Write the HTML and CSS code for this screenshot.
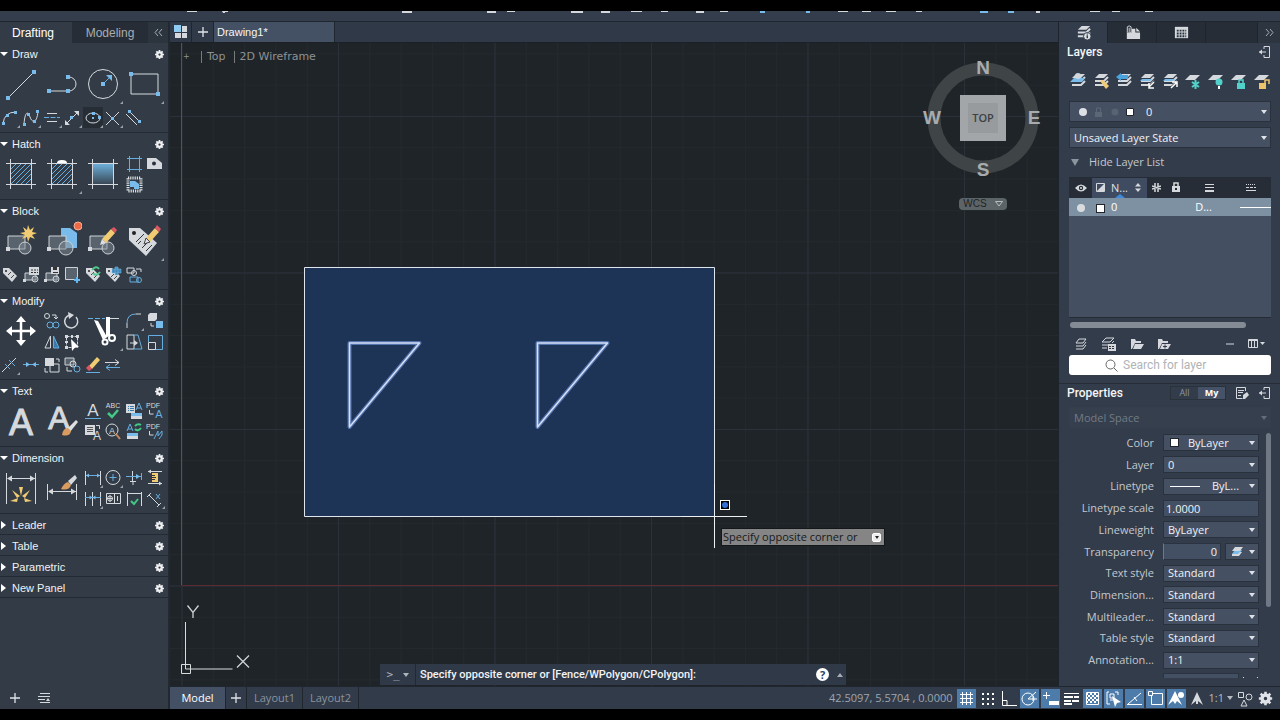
FILE: index.html
```html
<!DOCTYPE html>
<html lang="en">
<head>
    <meta charset="UTF-8">
    <meta name="viewport" content="width=device-width, initial-scale=1.0">
    <title>Drawing1*</title>
    <link rel="stylesheet" href="styles.css">
</head>
<body>
    <!-- shared icon shapes -->
    <svg class="defs" width="0" height="0">
        <symbol id="gear" viewBox="0 0 16 16">
            <circle cx="8" cy="8" r="4" fill="none" stroke="currentColor" stroke-width="4"/>
            <path d="M8 0v4M8 12v4M0 8h4M12 8h4M2.4 2.4l2.8 2.8M10.8 10.8l2.8 2.8M2.4 13.6l2.8-2.8M10.8 5.2l2.8-2.8" stroke="currentColor" stroke-width="3"/>
        </symbol>
        <symbol id="plus" viewBox="0 0 12 12"><path d="M6 1v10M1 6h10" stroke="currentColor" stroke-width="1.3"/></symbol>
        <symbol id="stack" viewBox="0 0 18 18">
            <path class="lf" d="M7 2h9l-4 4H3z"/>
            <path class="l2" d="M3 9h9l4-4M3 13h9l4-4"/>
        </symbol>
        <symbol id="dock" viewBox="0 0 12 12"><path class="l" d="M5 3V.5h5.500v11H5V9"/><path class="l" d="M0 6h7"/><path class="lf" d="M0 6l3-2.500v5z"/></symbol>
    </svg>

    <div class="app">
        <div class="top-strip">
            <svg width="1280" height="11">
                <path class="lf" d="M187 0h10v1h-10zM222 0h6v1h-3v1h-2zM402 0h10v2h-10zM487 0h9v2h-9zM507 0h8v1h-8zM571 0h12v2h-12zM601 0h9v2h-9zM631 0h11v1h-11zM661 0h7v1h-7zM696 0h8v2h-8zM720 0h8v1h-8zM838 0h10v1h-10zM862 0h9v1h-9zM886 0h10v1h-10zM916 0h6v1h-6zM1036 0h4v2h-4zM1090 0h10v1h-10zM1112 0h8v1h-8zM1145 0h8v1h-8z"/>
                <path class="bf" d="M760 0h5v2h-5zM806 0h4v2h-4zM980 0h8v2h-8zM1008 0h6v2h-6z"/>
            </svg>
        </div>
        <div class="workspace">
            <aside class="tools">
                <nav class="tool-tabs">
                    <button class="active">Drafting</button>
                    <button>Modeling</button>
                    <button class="collapse" aria-label="Collapse"><svg width="9" height="7" viewBox="0 0 9 7"><path d="M4 0L1 3.500 4 7M8 0L5 3.500 8 7" fill="none" stroke="currentColor"/></svg></button>
                </nav>

                <section class="panel">
                    <header><i class="tri open"></i><h2>Draw</h2><button class="gear" aria-label="Draw settings"><svg><use href="#gear"/></svg></button></header>
                    <div class="grid">
                        <button class="big" aria-label="Line"><svg viewBox="0 0 40 40"><path class="l" d="M7 34L33 8"/><path class="bf" d="M5 32h4v4H5zM31 6h4v4h-4z"/></svg></button>
                        <button class="big" aria-label="Polyline"><svg viewBox="0 0 40 40"><path class="l" d="M7 27h20a7 7 0 0 0 0-14h-2"/><path class="bf" d="M5 25h4v4H5zM24 25h4v4h-4zM24 11h4v4h-4z"/></svg></button>
                        <button class="big" aria-label="Circle"><svg viewBox="0 0 40 40"><circle class="l" cx="20" cy="20" r="14.500"/><path class="b" d="M20 20l7-7"/><path class="bf" d="M18 18h4v4h-4zM29 11v6l-6-6z"/><path class="corner" d="M40 40h-3l3-3z"/></svg></button>
                        <button class="big" aria-label="Rectangle"><svg viewBox="0 0 40 40"><path class="l" d="M7 10h27v20H7z"/><path class="bf" d="M5 8h4v4H5zM32 28h4v4h-4z"/><path class="corner" d="M40 40h-3l3-3z"/></svg></button>
                    </div>
                    <div class="grid second">
                        <button aria-label="Arc"><svg viewBox="0 0 20 20"><path class="l" d="M3 16Q4 4 16 4"/><path class="bf" d="M2 14h3v3H2zM6 6h3v3H6zM14 3h3v3h-3z"/><path class="corner" d="M20 20h-3l3-3z"/></svg></button>
                        <button aria-label="Spline"><svg viewBox="0 0 20 20"><path class="l" d="M3 16C4 3 7 3 9 9s7 7 8-6"/><path class="bf" d="M2 15h3v3H2zM6 5h3v3H6zM12 12h3v3h-3zM15 2h3v3h-3z"/><path class="corner" d="M20 20h-3l3-3z"/></svg></button>
                        <button aria-label="Construction line"><svg viewBox="0 0 20 20"><path class="l" d="M5 5.500h10M5 13.500h10"/><path class="b" d="M2 9.500h16" stroke-dasharray="5 1.500"/><path class="corner" d="M20 20h-3l3-3z"/></svg></button>
                        <button aria-label="Ray"><svg viewBox="0 0 20 20"><path class="l" d="M5 15L15 5"/><path class="lf" d="M3 17v-5l5 5zM17 3v5l-5-5z"/><path class="bf" d="M8 8h3v3H8z"/><path class="corner" d="M20 20h-3l3-3z"/></svg></button>
                        <button class="hover" aria-label="Ellipse"><svg viewBox="0 0 20 20"><ellipse class="l" cx="10" cy="10" rx="7" ry="5"/><path class="bf" d="M9 9h2v2H9zM9 4h3v3H9zM15 8h3v3h-3z"/><path class="corner" d="M20 20h-3l3-3z"/></svg></button>
                        <button aria-label="Divide"><svg viewBox="0 0 20 20"><path class="l" d="M3 4l13 13M16 4L3 17"/><path class="bf" d="M8 9h3v3H8z"/><path class="corner" d="M20 20h-3l3-3z"/></svg></button>
                        <button aria-label="Multiline"><svg viewBox="0 0 20 20"><path class="l" d="M5 3l11 11M2 6l11 11"/><path class="bf" d="M4 2h3v3H4zM14 12h3v3h-3z"/></svg></button>
                    </div>
                </section>

                <section class="panel">
                    <header><i class="tri open"></i><h2>Hatch</h2><button class="gear" aria-label="Hatch settings"><svg><use href="#gear"/></svg></button></header>
                    <div class="grid">
                        <button class="big" aria-label="Hatch"><svg viewBox="0 0 40 40"><path class="b" d="M10 15l5-5M10 20l10-10M10 25l15-15M10 30l20-20M15 30l16-16M20 30l11-11M25 30l6-6"/><path class="l" d="M5 9.500h30M5 30.500h30M9.500 5v30M30.500 5v30"/></svg></button>
                        <button class="big" aria-label="Boundary"><svg viewBox="0 0 40 40"><path class="b" d="M10 15l5-5M10 20l10-10M10 25l15-15M10 30l20-20M15 30l16-16M20 30l11-11M25 30l6-6"/><path class="l" d="M5 9.500h30M5 30.500h30M9.500 5v30M30.500 5v30"/><path fill="#fff" d="M15 9q0-3 5-3t5 3z"/><path class="corner" d="M40 40h-3l3-3z"/></svg></button>
                        <button class="big" aria-label="Gradient"><svg viewBox="0 0 40 40"><defs><linearGradient id="fade" x2="0" y2="1"><stop stop-color="#6fb4e0"/><stop offset="1" stop-color="#37434f"/></linearGradient></defs><path fill="url(#fade)" d="M9 9h22v22H9z"/><path class="l" d="M5 9.500h30M5 30.500h30M9.500 5v30M30.500 5v30"/></svg></button>
                        <button aria-label="Region"><svg viewBox="0 0 20 20"><path class="b" d="M3 4.500h15M3 15.500h15M5.500 2v16M15.500 2v16"/></svg></button>
                        <button aria-label="Wipeout"><svg viewBox="0 0 20 20"><path class="lf" d="M2 4h9l6 5v6H2z"/><circle cx="9" cy="9.500" r="2" fill="#29323c"/></svg></button>
                        <button aria-label="Hatch edit"><svg viewBox="0 0 20 20"><path fill="none" stroke="#dce0e4" stroke-width="3" stroke-dasharray="1.200 1" d="M4 3h13v13H4z"/><path class="bf" d="M6 6h5l4 3v5h-5v-2H6z"/></svg></button>
                    </div>
                </section>

                <section class="panel">
                    <header><i class="tri open"></i><h2>Block</h2><button class="gear" aria-label="Block settings"><svg><use href="#gear"/></svg></button></header>
                    <div class="grid">
                        <button class="big" aria-label="Create block"><svg viewBox="0 0 40 40"><path class="blk" d="M7 15h17v13H7z"/><circle class="ring" cx="24" cy="27" r="6"/><path class="lf" d="M5 26h4v4H5z"/><path class="yf" d="M27 4l2 5 4-3-2 5 5 1-5 2 3 4-5-2-2 5-1-5-5 2 3-4-5-2 5-1-2-5 4 3z"/></svg></button>
                        <button class="big" aria-label="Insert block"><svg viewBox="0 0 40 40"><path class="bf" d="M19 7h9l7 5v15H19z"/><path class="blk" d="M7 15h17v13H7z"/><circle class="ring" cx="24" cy="27" r="7"/><path class="lf" d="M5 26h4v4H5z"/><circle cx="36" cy="5" r="4" fill="#ee6945" stroke="#f7b09a"/></svg></button>
                        <button class="big" aria-label="Edit block"><svg viewBox="0 0 40 40"><path class="blk" d="M7 15h17v13H7z"/><circle class="ring" cx="25" cy="27" r="6"/><path class="lf" d="M5 26h4v4H5z"/><path class="yf" d="M19 18l9-10 4 4-9 10z"/><path fill="#dce0e4" d="M19 18l4 4-6 2z"/><path fill="#df5663" d="M28 8l3-2 3 3-2 3z"/></svg></button>
                        <button class="big" aria-label="Edit attributes"><svg viewBox="0 0 40 40"><path class="lf" d="M5 7h11l17 15-11 13L5 19z"/><circle cx="10" cy="12" r="2" fill="#222"/><path fill="none" stroke="#333" d="M12 21l8-8M14 23l3-3M18 27l8-8M22 30l6-6"/><path class="yf" d="M22 17l9-10 4 4-9 10z"/><path fill="#dce0e4" stroke="#444" d="M22 17l4 4-6 2z"/><path fill="#df5663" d="M31 7l2-3 4 4-2 3z"/><path class="corner" d="M40 40h-3l3-3z"/></svg></button>
                    </div>
                    <div class="grid second">
                        <button aria-label="Define attribute"><svg viewBox="0 0 20 20"><path class="lf" d="M3 3h6l8 8-5 6-9-9z"/><circle cx="6" cy="6" r="1" fill="#222"/><path stroke="#444" d="M8 10l3-3M11 13l3-3"/></svg></button>
                        <button aria-label="Block attribute manager"><svg viewBox="0 0 20 20"><path class="blk" d="M4 8h11v7H4z"/><circle class="ring" cx="14" cy="14" r="3"/><path class="lf" d="M8 2h10v8H8zM2 14h3v3H2z"/><path stroke="#333" stroke-dasharray="2 1" d="M10 5h7M10 7.500h7"/></svg></button>
                        <button aria-label="Save block"><svg viewBox="0 0 20 20"><path class="blk" d="M4 8h11v7H4z"/><circle class="ring" cx="14" cy="14" r="3"/><path class="lf" d="M9 2h8v7H9zM2 14h3v3H2z"/><path fill="#333" d="M11 2h4v3h-4zM11 7h5v1h-5z"/></svg></button>
                        <button aria-label="Base point"><svg viewBox="0 0 20 20"><path class="blk" d="M3.500 2.500h12v12h-12z"/><path stroke="#65b8ed" stroke-width="2" d="M15 12v6M12 15h6"/></svg></button>
                        <button aria-label="Sync attributes"><svg viewBox="0 0 20 20"><path class="lf" d="M3 3h6l8 8-5 6-9-9z"/><circle cx="6" cy="6" r="1" fill="#222"/><path stroke="#444" d="M8 10l3-3M11 13l3-3"/><path fill="none" stroke="#51c98a" stroke-width="2" d="M9 5q4-5 7-1M17 7q-4 5-7 1"/></svg></button>
                        <button aria-label="Retain attributes"><svg viewBox="0 0 20 20"><path class="lf" d="M3 3h6l8 8-5 6-9-9z"/><circle cx="6" cy="6" r="1" fill="#222"/><path stroke="#444" d="M8 12l3-3M11 14l3-3"/><path fill="#3d85b8" stroke="#7fc0ea" stroke-width=".5" d="M12 2h3v8h-3zM9 4h9v4H9z"/></svg></button>
                        <button aria-label="Replace block"><svg viewBox="0 0 20 20"><path class="l" d="M3 3h7v5H3zM12 4h5v3"/><circle class="l" cx="10" cy="8" r="2.500"/><path class="b" d="M6 12h8v5H6z"/><circle class="b" cx="15" cy="15" r="2.500"/></svg></button>
                    </div>
                </section>

                <section class="panel">
                    <header><i class="tri open"></i><h2>Modify</h2><button class="gear" aria-label="Modify settings"><svg><use href="#gear"/></svg></button></header>
                    <div class="grid">
                        <button class="big" aria-label="Move"><svg viewBox="0 0 40 40"><path fill="none" stroke="#fff" stroke-width="2.500" d="M20 9v22M9 20h22"/><path fill="#fff" d="M20 5l5 6H15zM20 35l5-6H15zM5 20l6-5v10zM35 20l-6-5v10z"/></svg></button>
                        <button aria-label="Copy"><svg viewBox="0 0 20 20"><circle class="l" cx="5" cy="5" r="2.500"/><path class="l" d="M10 4h4v4M12 6l2 2 2-2"/><circle class="b" cx="8" cy="14" r="3"/><circle class="b" cx="14" cy="14" r="3"/></svg></button>
                        <button aria-label="Rotate"><svg viewBox="0 0 20 20"><path class="l" stroke-width="1.500" d="M8 4a6.500 6.500 0 1 0 6 2"/><path class="lf" d="M6 1l6 3-5 4z"/></svg></button>
                        <button class="big" aria-label="Trim"><svg viewBox="0 0 40 40"><path class="b" d="M5 7.500h17" stroke-dasharray="5 2"/><path class="l" d="M27 7.500h9"/><path fill="#fff" d="M11 9l4 1 9 16-4 3zM23 6h4v18l-4 3z"/><circle cx="22" cy="31" r="2.500" fill="none" stroke="#fff" stroke-width="2"/><circle cx="29" cy="27" r="3" fill="none" stroke="#fff" stroke-width="2"/><path class="corner" d="M40 40h-3l3-3z"/></svg></button>
                        <button aria-label="Fillet"><svg viewBox="0 0 20 20"><path class="b" d="M3 12Q3 3 12 3"/><path class="l" d="M3 12v5M12 3h5"/><path class="corner" d="M20 20h-3l3-3z"/></svg></button>
                        <button aria-label="Explode"><svg viewBox="0 0 20 20"><path class="lf" d="M3 4l2-2h7v6l-2 2H3z"/><path class="bf" d="M11 10h7v7h-7z"/><path class="l" d="M6 12v3h3"/></svg></button>
                        <button aria-label="Mirror"><svg viewBox="0 0 20 20"><path class="l" d="M8.500 4v12H3z"/><path fill="#3979a8" stroke="#65aee0" d="M11.500 4v12H17z"/></svg></button>
                        <button aria-label="Array"><svg viewBox="0 0 20 20"><path class="l" stroke-dasharray="3 1" d="M4.500 4.500h11v11h-11z"/><path class="lf" d="M3 3h3v3H3zM9 3h2v3H9zM14 3h3v3h-3zM3 9h3v2H3zM3 14h3v3H3z"/><path fill="#fff" d="M9 7l8 8-4 .500-3 3.500z"/></svg></button>
                        <button aria-label="Stretch"><svg viewBox="0 0 20 20"><path class="l" d="M10 3H3v14h7zM6 11h7"/><path class="lf" d="M10 8l4 3-4 3z"/><path class="b" d="M10 3h4l4 14h-8"/></svg></button>
                        <button aria-label="Scale"><svg viewBox="0 0 20 20"><path class="b" d="M3.500 10V3.500h14v14H10"/><path class="l" d="M3.500 10.500h7v7h-7z"/></svg></button>
                    </div>
                    <div class="grid second">
                        <button aria-label="Join"><svg viewBox="0 0 20 20"><path class="l" d="M2 17L16 3"/><path class="b" d="M5 9l5 5M9 5l6 6"/><path class="corner" d="M20 20h-3l3-3z"/></svg></button>
                        <button aria-label="Break"><svg viewBox="0 0 20 20"><path class="b" d="M2 9.500h16"/><path class="bf" d="M5 7l4 2.500L5 12zM15 7l-4 2.500 4 2.500z"/></svg></button>
                        <button aria-label="Overlap front"><svg viewBox="0 0 20 20"><path class="lf" d="M3 3h9v8H3z"/><path class="l" d="M8 9h9v8H8zM14 4h3v3M3 13v4h3"/></svg></button>
                        <button aria-label="Overlap back"><svg viewBox="0 0 20 20"><path class="blk" d="M3 3h9v7H3z"/><circle class="l" cx="11" cy="9" r="3"/><path class="l" d="M5 12v4h5"/><circle class="b" cx="15" cy="14" r="3"/></svg></button>
                        <button aria-label="Erase"><svg viewBox="0 0 20 20"><path class="yf" d="M6 11l8-9 3 3-8 9z"/><path fill="#df5663" d="M3 13l3-3 3 4-3 2z"/><path class="b" d="M3 17.500h14"/></svg></button>
                        <button aria-label="Reverse"><svg viewBox="0 0 20 20"><path class="l" d="M2 7.500h14M12 4.500l4 3-4 3"/><path class="b" d="M3 12.500h14M7 9.500l-4 3 4 3"/></svg></button>
                    </div>
                </section>

                <section class="panel">
                    <header><i class="tri open"></i><h2>Text</h2><button class="gear" aria-label="Text settings"><svg><use href="#gear"/></svg></button></header>
                    <div class="grid">
                        <button class="big" aria-label="Multiline text"><svg viewBox="0 0 40 40"><text class="letter heavy" x="20" y="34" font-size="36">A</text></svg></button>
                        <button class="big" aria-label="Text style"><svg viewBox="0 0 40 40"><text class="letter heavy" x="17" y="28" font-size="32">A</text><path fill="#dce0e4" d="M25 28l9-9 2 2-8 10z"/><path fill="#d99c60" d="M20 34q1-7 6-7l3 3q-1 6-9 4z"/></svg></button>
                        <button aria-label="Single line text"><svg viewBox="0 0 20 20"><text class="letter" x="10" y="15" font-size="17">A</text><path class="b" d="M2 17.500h16"/></svg></button>
                        <button aria-label="Spell check"><svg viewBox="0 0 20 20"><text class="tiny" x="10" y="7">ABC</text><path fill="none" stroke="#42c985" stroke-width="2.500" d="M5 12l4 4 6-7"/></svg></button>
                        <button aria-label="Update field"><svg viewBox="0 0 20 20"><path class="lf" d="M2 3h9v9H2z"/><path stroke="#3979a8" stroke-dasharray="1 1 4 9" d="M4 5.500h6M4 7.500h6M4 9.500h6"/><path class="b" d="M12 9l3-7 3 7M13 7h4"/><path class="bf" d="M7 12h11v3H7z"/><path class="lf" d="M7 15h11v3H7z"/></svg></button>
                        <button aria-label="PDF text"><svg viewBox="0 0 20 20"><text class="tiny" x="8" y="7">PDF</text><path class="l" d="M4.500 9v4h4"/><text class="letter blue" x="14" y="17" font-size="11">A</text></svg></button>
                        <button aria-label="Text align"><svg viewBox="0 0 20 20"><path class="lf" d="M2 3h10v10H2z"/><path stroke="#555" d="M4 5.500h6M4 7.500h6M4 9.500h6"/><path class="l" d="M13 3.500h3.500V7"/><text class="letter" x="14" y="18" font-size="12">A</text></svg></button>
                        <button aria-label="Find text"><svg viewBox="0 0 20 20"><circle class="l" cx="9" cy="8" r="6"/><path stroke="#c9885c" stroke-width="2" d="M13 12l4 5"/><text class="letter" x="9" y="12" font-size="9">A</text></svg></button>
                        <button aria-label="Convert field"><svg viewBox="0 0 20 20"><path class="b" d="M3 9l3-7 3 7M4 7h4"/><path fill="none" stroke="#42c985" stroke-width="2" d="M11 4q3-3 6-1M17 6q-3 4-6 1"/><path class="bf" d="M3 11h11v3H3z"/><path class="lf" d="M3 14h11v3H3z"/></svg></button>
                        <button aria-label="PDF import"><svg viewBox="0 0 20 20"><text class="tiny" x="8" y="7">PDF</text><path class="l" d="M4.500 9v4h4"/><path class="b" d="M9 17l4-8v5l4-5v4l-3 4"/></svg></button>
                    </div>
                </section>

                <section class="panel">
                    <header><i class="tri open"></i><h2>Dimension</h2><button class="gear" aria-label="Dimension settings"><svg><use href="#gear"/></svg></button></header>
                    <div class="grid">
                        <button class="big" aria-label="Dimension"><svg viewBox="0 0 40 40"><path class="l" d="M5.500 5v31M34.500 5v31M7 10.500h27"/><path class="lf" d="M6 10.500l5-3v6zM34 10.500l-5-3v6z"/><path class="yf" d="M9 33l8-3-1 4zM11 22l8 6-3 2zM18 19h4l-2 9zM29 22l-8 6 3 2zM31 33l-8-3 1 4z"/></svg></button>
                        <button class="big" aria-label="Dimension style"><svg viewBox="0 0 40 40"><path class="l" d="M5.500 16v16M34.500 16v16M7 23.500h27"/><path class="lf" d="M6 23.500l5-3v6zM34 23.500l-5-3v6z"/><path fill="#d99c60" d="M19 21q3-6 7-7l3 3q-2 6-10 4z"/><path class="lf" d="M26 13l7-6 2 3-6 7z"/></svg></button>
                        <button aria-label="Linear"><svg viewBox="0 0 20 20"><path class="l" d="M2.500 3v14M17.500 3v14"/><path class="b" d="M3 7.500h14"/><path class="bf" d="M3 7.500l3-2v4zM17 7.500l-3-2v4z"/><path class="corner" d="M20 20h-3l3-3z"/></svg></button>
                        <button aria-label="Center mark"><svg viewBox="0 0 20 20"><circle class="l" cx="10" cy="9.500" r="7"/><path class="b" d="M10 6v7M6.500 9.500h7"/><path class="corner" d="M20 20h-3l3-3z"/></svg></button>
                        <button aria-label="Ordinate"><svg viewBox="0 0 20 20"><path class="l" d="M8.500 3v10M6 13.500h6M9 13v4"/><path class="b" d="M2 8.500h16M17.500 5v7"/><path class="bf" d="M12 6l4 2.500-4 2.500z"/></svg></button>
                        <button aria-label="Measure"><svg viewBox="0 0 20 20"><path class="l" d="M3 3.500h14M3 15.500h14"/><path class="lf" d="M3 3.500l3-2v4zM17 15.500l-3-2v4z"/><path class="yf" d="M7 5h6v9H7z"/><path stroke="#333" d="M7 7.500h3M7 9.500h4M7 11.500h3"/></svg></button>
                        <button aria-label="Continue"><svg viewBox="0 0 20 20"><path class="l" d="M2.500 3v14M9.500 3v14M17.500 3v14"/><path class="b" d="M2 8.500h16"/><path class="bf" d="M9.500 8.500l-3-2v4zM9.500 8.500l3-2v4z"/><path class="corner" d="M20 20h-3l3-3z"/></svg></button>
                        <button aria-label="Tolerance"><svg viewBox="0 0 20 20"><path class="l" d="M3.500 4.500h14v10h-14zM11.500 5v10M14.500 7v5"/><circle class="l" cx="7" cy="9.500" r="2.500"/><path class="l" d="M7 6v7M4 9.500h6"/></svg></button>
                        <button aria-label="Inspect"><svg viewBox="0 0 20 20"><path class="l" d="M3.500 3v14M17.500 3v14M3 4.500h14"/><path fill="none" stroke="#42c985" stroke-width="2" d="M7 12l3 3 4-5"/></svg></button>
                        <button aria-label="Oblique"><svg viewBox="0 0 20 20"><path class="l" d="M2 8l4-4M12 18l4-4M4 6l10 10"/><path class="b" d="M11 5l4 5M15 5l-4 5"/><path class="corner" d="M20 20h-3l3-3z"/></svg></button>
                    </div>
                </section>

                <section class="panel closed"><header><i class="tri"></i><h2>Leader</h2><button class="gear" aria-label="Leader settings"><svg><use href="#gear"/></svg></button></header></section>
                <section class="panel closed"><header><i class="tri"></i><h2>Table</h2><button class="gear" aria-label="Table settings"><svg><use href="#gear"/></svg></button></header></section>
                <section class="panel closed"><header><i class="tri"></i><h2>Parametric</h2><button class="gear" aria-label="Parametric settings"><svg><use href="#gear"/></svg></button></header></section>
                <section class="panel closed"><header><i class="tri"></i><h2>New Panel</h2><button class="gear" aria-label="New Panel settings"><svg><use href="#gear"/></svg></button></header></section>

                <footer class="tools-footer">
                    <button aria-label="Add panel"><svg width="12" height="12"><use href="#plus"/></svg></button>
                    <button aria-label="Panel options"><svg width="14" height="12" viewBox="0 0 14 12"><path class="l" d="M3 1.500h10M1 4.500h12M1 7.500h7M3 10.500h10"/><path class="lf" d="M9 9l2-3 2 3z"/></svg></button>
                </footer>
            </aside>

            <div class="stage">
                <div class="stage-row">
                    <main class="document">
                        <nav class="file-tabs">
                            <button class="home" aria-label="Start tab"><svg width="14" height="14" viewBox="0 0 14 14"><path fill="#8ecbf2" d="M0 0h7v7H0z"/><path class="lf" d="M8 1h5v6H8zM1 8h6v5H1zM8 8h5v5H8z"/></svg></button>
                            <button class="add" aria-label="New drawing"><svg width="12" height="12"><use href="#plus"/></svg></button>
                            <button class="file active">Drawing1*</button>
                        </nav>
                        <div class="canvas">
                            <svg class="drawing">
                                <defs>
                                    <pattern id="minor" width="31.300" height="31.300" x="11.500" y="10.400" patternUnits="userSpaceOnUse"><path d="M.5 0v32M0 .5h32" stroke="#23292f" fill="none"/></pattern>
                                    <pattern id="major" width="156.500" height="156.500" x="11.500" y="73" patternUnits="userSpaceOnUse"><path d="M.5 0v157M0 .5h157" stroke="#2b303b" fill="none"/></pattern>
                                </defs>
                                <rect width="100%" height="100%" fill="url(#minor)"/>
                                <rect width="100%" height="100%" fill="url(#major)"/>
                                <path d="M11.500 0V542" stroke="#3c6a22" fill="none"/>
                                <path d="M12 542.500H888" stroke="#5c2b2f" fill="none"/>
                                <!-- selection window -->
                                <path d="M134.500 224.500h410v249h-410z" fill="#1e3456" stroke="#dfe5ec"/>
                                <g fill="none" stroke-linejoin="round">
                                    <path d="M179.500 300h70l-70 84zM367.500 300h70l-70 84z" stroke="#5373ac" stroke-width="4"/>
                                    <path d="M179.500 300h70l-70 84zM367.500 300h70l-70 84z" stroke="#d5e0f6" stroke-width="1.500"/>
                                </g>
                                <!-- crosshair -->
                                <path d="M513 473.500h64M544.500 441v64" stroke="#eef1f4" fill="none"/>
                                <rect x="550.500" y="457.500" width="9" height="9" fill="#000" stroke="#fff"/>
                                <circle cx="555" cy="462" r="3" fill="#356fd6"/>
                                <!-- ucs -->
                                <path d="M11.500 621.500h9v9h-9zM15.500 579v47h47" fill="none" stroke="#d9dcde"/>
                                <path d="M17.500 562.500l5.500 7 5.500-7M23 569v6M67 612.500l12 12M79 612.500l-12 12" fill="none" stroke="#d0d3d5" stroke-width="1.300"/>
                            </svg>
                            <div class="view-label"><span class="cross">+</span><span>Top</span><span>2D Wireframe</span></div>
                            <div class="viewcube">
                                <svg width="124" height="124" viewBox="0 0 124 124">
                                    <circle cx="62" cy="62" r="49" fill="none" stroke="#3f4447" stroke-width="13"/>
                                    <path fill="#a3a6a8" d="M39 39h46v46H39z"/>
                                    <path fill="#979b9e" d="M47 47h30v30H47z"/>
                                    <text class="face" x="62" y="66">TOP</text>
                                    <text class="dir" x="62" y="18">N</text>
                                    <text class="dir" x="62" y="120">S</text>
                                    <text class="dir" x="11" y="68">W</text>
                                    <text class="dir" x="113" y="68">E</text>
                                </svg>
                                <button class="wcs">WCS<svg width="8" height="6" viewBox="0 0 8 6"><path d="M.5.500h7L4 5z" fill="none" stroke="#b8bcbd"/></svg></button>
                            </div>
                            <div class="prompt">Specify opposite corner or<i class="more"></i></div>
                            <div class="command">
                                <button class="history">&gt;_<i class="tri open"></i></button>
                                <input aria-label="Command" value="Specify opposite corner or [Fence/WPolygon/CPolygon]:">
                                <button class="help" aria-label="Help">?</button>
                                <i class="up"></i>
                            </div>
                        </div>
                    </main>

                    <aside class="palettes">
                        <nav class="palette-tabs">
                            <button class="active" aria-label="Layers"><svg viewBox="0 0 18 18"><use href="#stack"/><circle cx="13" cy="13" r="4" fill="#dce0e4" stroke="#333c4a"/><path stroke="#333c4a" stroke-width="1.500" d="M13 10v1M13 12v3"/></svg></button>
                            <button aria-label="References"><svg viewBox="0 0 18 18"><path class="lf" d="M3 9h5V5h4v4h5v7H3zM13 4l4 4h-4z"/><path class="l" d="M3.500 9V3q2-2 4 0v6q-2 2-2 0V4"/></svg></button>
                            <button aria-label="Sheets"><svg viewBox="0 0 18 18"><path class="lf" d="M2 3h14v12H2z"/><path stroke="#29303b" stroke-width="2" stroke-dasharray="2 1" d="M4 7h10M4 10h10M4 13h10"/></svg></button>
                            <span></span>
                            <button class="collapse" aria-label="Collapse"><svg viewBox="0 0 9 7"><path d="M1 0l3 3.500L1 7M5 0l3 3.500L5 7" fill="none" stroke="currentColor"/></svg></button>
                        </nav>

                        <section class="layers">
                            <header class="title"><h2>Layers</h2><button aria-label="Undock Layers"><svg width="12" height="12"><use href="#dock"/></svg></button></header>
                            <div class="layer-tools">
                                <button aria-label="Make current"><svg viewBox="0 0 18 18"><use href="#stack"/><path class="bf" d="M5 6h11l-3 4H1z"/><circle cx="9" cy="4" r="3" fill="#cfd6dc"/></svg></button>
                                <button aria-label="Match"><svg viewBox="0 0 18 18"><use href="#stack"/><path class="yf" d="M8 9l3-1 6 6-3 3z"/></svg></button>
                                <button aria-label="Previous"><svg viewBox="0 0 18 18"><use href="#stack"/><path fill="#4ba3df" d="M1 5l5-4v2h7v4H6v2z"/></svg></button>
                                <button aria-label="Isolate"><svg viewBox="0 0 18 18"><use href="#stack"/><path class="bf" d="M4 7h10l-2 2H2z"/><path stroke="#333c4a" stroke-width="4" d="M17 10l-7 7"/><path stroke="#fff" fill="none" stroke-width="1.500" d="M16 10l-5 5M11 11v5h5"/></svg></button>
                                <button aria-label="Unisolate"><svg viewBox="0 0 18 18"><use href="#stack"/><path class="bf" d="M4 7h10l-2 2H2z"/><path stroke="#333c4a" stroke-width="4" d="M10 17l7-7"/><path stroke="#fff" fill="none" stroke-width="1.500" d="M10 16l6-6M11 10h5v5"/></svg></button>
                                <button aria-label="Freeze"><svg viewBox="0 0 18 18"><path class="lf" d="M6 3h10l-5 5H1z"/><path stroke="#52d1ca" stroke-width="2" d="M11.500 8v9M8 10l7 5M15 10l-7 5"/></svg></button>
                                <button aria-label="Turn off"><svg viewBox="0 0 18 18"><path class="lf" d="M6 3h10l-5 5H1z"/><circle cx="12" cy="10" r="3.500" fill="#52d1ca"/><path stroke="#fff" stroke-width="2" d="M12 14v3"/></svg></button>
                                <button aria-label="Lock"><svg viewBox="0 0 18 18"><path class="lf" d="M6 3h10l-5 5H1z"/><path fill="#52d1ca" d="M7 11h8v6H7z"/><path fill="none" stroke="#52d1ca" stroke-width="1.500" d="M9 11V8h4v3"/></svg></button>
                                <button aria-label="Unlock"><svg viewBox="0 0 18 18"><path class="lf" d="M6 3h10l-5 5H1z"/><path fill="#eec46b" d="M6 11h7v6H6z"/><path fill="none" stroke="#eec46b" stroke-width="1.500" d="M12 11V8h4v4"/></svg></button>
                            </div>
                            <div class="select tall current">
                                <svg width="62" height="14" viewBox="0 0 62 14"><circle cx="5" cy="7" r="4" fill="#dce0e4"/><path fill="#5c6776" d="M17 7h7v5h-7z"/><path fill="none" stroke="#5c6776" d="M18.500 7V3h4v4"/><circle cx="37" cy="7" r="3.500" fill="#586372"/><path fill="#fff" stroke="#20252c" d="M48.500 3.500h7v7h-7z"/></svg>
                                <select aria-label="Current layer"><option>0</option></select>
                            </div>
                            <div class="select tall"><select aria-label="Layer state"><option>Unsaved Layer State</option></select></div>
                            <button class="hide-list"><i class="tri open"></i>Hide Layer List</button>
                            <div class="layer-list">
                                <table>
                                    <thead>
                                        <tr>
                                            <th><svg width="12" height="8" viewBox="0 0 12 8"><path class="lf" d="M0 4q6-7 12 0-6 7-12 0z"/><circle cx="6" cy="4" r="2.200" fill="#262c35"/><circle cx="6" cy="4" r="1" fill="#dce0e4"/></svg></th>
                                            <th class="sorted"><svg width="9" height="9" viewBox="0 0 9 9"><path class="l" d="M.5.500h8v8h-8z"/><path class="lf" d="M8 1v7H1z"/></svg></th>
                                            <th class="sorted name">N...<svg width="6" height="9" viewBox="0 0 6 9"><path class="lf" d="M3 0l3 3.500H0zM3 9l3-3.500H0z"/></svg><i class="sort-mark"></i></th>
                                            <th><svg width="9" height="9" viewBox="0 0 9 9"><path class="l" stroke-width="1.500" d="M3 0v9M6 0v9M0 3l9 3M0 6l9-3"/></svg></th>
                                            <th><svg width="8" height="10" viewBox="0 0 8 10"><path class="lf" d="M0 4h8v6H0z"/><path class="l" stroke-width="1.500" d="M2 4V1h4v3"/><path fill="#262c35" d="M3 6h2v2H3z"/></svg></th>
                                            <th class="weight"><svg width="9" height="8" viewBox="0 0 9 8"><path class="lf" d="M0 0h9v1H0zM0 3h9v1H0zM0 6h9v2H0z"/></svg></th>
                                            <th><svg width="10" height="8" viewBox="0 0 10 8"><path class="l" stroke-dasharray="1 1" d="M0 .5h10"/><path class="l" stroke-dasharray="3 1" d="M0 3.500h10"/><path class="l" d="M0 6.500h10"/></svg></th>
                                        </tr>
                                    </thead>
                                    <tbody>
                                        <tr>
                                            <td><i class="dot"></i></td>
                                            <td><i class="swatch"></i></td>
                                            <td class="name">0</td>
                                            <td></td>
                                            <td></td>
                                            <td class="weight">D...</td>
                                            <td class="line"><i></i></td>
                                        </tr>
                                    </tbody>
                                </table>
                            </div>
                            <div class="hscroll"></div>
                            <div class="list-tools">
                                <button aria-label="New layer"><svg width="12" height="12" viewBox="0 0 12 12"><path class="l" d="M4 1h7L8 5H1zM11 4L8 8H1M11 7l-3 4H1"/></svg></button>
                                <button aria-label="Layer states"><svg width="16" height="14" viewBox="0 0 16 14"><path class="l" d="M5 1h8l-4 4H1zM7 8H1M13 4l-2 2M6 11H1"/><path class="lf" d="M7 7h8v7H7z"/><path stroke="#333" stroke-dasharray="2 1" d="M8 9.500h6M8 11.500h6"/></svg></button>
                                <button aria-label="New group"><svg width="13" height="10" viewBox="0 0 13 10"><path class="lf" d="M0 0h4l1 2h5v2H4L1 10H0zM4 5h9l-3 5H2z"/></svg></button>
                                <button aria-label="New filter"><svg width="13" height="10" viewBox="0 0 13 10"><path class="lf" d="M0 0h4l1 2h5v2H4L1 10H0zM4 5h9l-3 5H2z"/><path stroke="#333c4a" d="M5 7.500h4M7 5.500v4"/></svg></button>
                                <button class="minus" aria-label="Delete layer"><svg width="8" height="2"><path class="l" d="M0 1h8"/></svg></button>
                                <button aria-label="Columns"><svg width="17" height="9" viewBox="0 0 17 9"><path class="l" d="M.5.500h9v8h-9zM0 1.500h10M3.500 0v9M6.500 0v9"/><path class="lf" d="M12 3h5l-2.500 3z"/></svg></button>
                            </div>
                            <div class="search">
                                <svg width="13" height="13" viewBox="0 0 13 13"><circle cx="5.500" cy="5.500" r="4.500" fill="none" stroke="#666"/><path d="M9 9l3.500 3.500" stroke="#666"/></svg>
                                <input type="search" aria-label="Search for layer" placeholder="Search for layer">
                            </div>
                        </section>

                        <section class="properties">
                            <header class="title">
                                <h2>Properties</h2>
                                <div class="toggle"><button>All</button><button class="active">My</button></div>
                                <button aria-label="Customize"><svg width="13" height="12" viewBox="0 0 13 12"><path class="l" d="M9.500 4V.500h-9v11h6M2 3.500h6M2 5.500h5M2 8.500h3"/><path class="lf" d="M7 8l4-3 2 3-4 4H7z"/></svg></button>
                                <button aria-label="Undock Properties"><svg width="12" height="12"><use href="#dock"/></svg></button>
                            </header>
                            <div class="select tall disabled"><select aria-label="Selection" disabled><option>Model Space</option></select></div>
                            <div class="prop-view">
                                <div class="prop-rows">
                                    <label for="p1">Color</label><div class="select color"><i class="swatch"></i><select id="p1"><option>ByLayer</option></select></div>
                                    <label for="p2">Layer</label><div class="select"><select id="p2"><option>0</option></select></div>
                                    <label for="p3">Linetype</label><div class="select ltype"><i class="rule"></i><select id="p3"><option>ByL...</option></select></div>
                                    <label for="p4">Linetype scale</label><input id="p4" value="1.0000">
                                    <label for="p5">Lineweight</label><div class="select"><select id="p5"><option>ByLayer</option></select></div>
                                    <label for="p6">Transparency</label><div class="pair"><input id="p6" class="right" value="0"><div class="select mini"><svg viewBox="0 0 12 10"><path class="bf" d="M4 3h7L8 7H1z"/><path class="lf" d="M4 0h8L9 4H1zM1 9h7l3-4H9L7 7H1z"/></svg><select aria-label="Transparency source"><option></option></select></div></div>
                                    <label for="p7">Text style</label><div class="select"><select id="p7"><option>Standard</option></select></div>
                                    <label for="p8">Dimension...</label><div class="select"><select id="p8"><option>Standard</option></select></div>
                                    <label for="p9">Multileader...</label><div class="select"><select id="p9"><option>Standard</option></select></div>
                                    <label for="p10">Table style</label><div class="select"><select id="p10"><option>Standard</option></select></div>
                                    <label for="p11">Annotation...</label><div class="select"><select id="p11"><option>1:1</option></select></div>
                                    <label for="p12">Text height</label><div class="pair"><input id="p12" class="long" value="0.2000"><svg width="15" height="9" viewBox="0 0 15 9"><path class="l" d="M.5 0v9M14.500 0v9"/><path class="b" d="M1 4h13M4 2L2 4l2 2M11 2l2 2-2 2"/></svg></div>
                                </div>
                                <div class="vscroll"></div>
                            </div>
                        </section>
                    </aside>
                </div>

                <footer class="status">
                    <nav class="layouts">
                        <button class="active">Model</button>
                        <button class="add" aria-label="New layout"><svg width="12" height="12"><use href="#plus"/></svg></button>
                        <button>Layout1</button>
                        <button>Layout2</button>
                    </nav>
                    <span class="coords">42.5097, 5.5704 , 0.0000</span>
                    <div class="modes">
                        <button class="on" aria-label="Grid"><svg viewBox="0 0 19 19"><path class="w" d="M5.500 3v13M9.500 3v13M13.500 3v13M3 5.500h13M3 9.500h13M3 13.500h13"/></svg></button>
                        <button aria-label="Snap"><svg viewBox="0 0 19 19"><path class="w" stroke-width="2" stroke-dasharray="2 3" d="M4 5h12M4 10h12M4 15h12"/></svg></button>
                        <button aria-label="Ortho"><svg viewBox="0 0 19 19"><path class="w" d="M3.500 2v14.500H18M3 11.500h5v5"/></svg></button>
                        <button class="on" aria-label="Polar"><svg viewBox="0 0 19 19"><circle class="w" cx="8" cy="10" r="6"/><path class="w" d="M8 10l8-7M8 10h9M13 7v5"/></svg></button>
                        <button class="on" aria-label="Dynamic input"><svg viewBox="0 0 19 19"><path class="w" d="M5.500 3v7M2 6.500h7"/><path fill="#fff" d="M8 12h10v4H8z"/></svg></button>
                        <button aria-label="Lineweight"><svg viewBox="0 0 19 19"><path class="w" d="M2 4.500h15"/><path class="w" stroke-width="2" d="M2 8h9M12 8h5M2 12h7M10 12h7"/><path class="w" stroke-width="2" d="M2 15h8"/></svg></button>
                        <button class="on" aria-label="Transparency"><svg viewBox="0 0 19 19"><path class="w" d="M3.500 3.500h12v12h-12z"/><path class="w" stroke-width="2" stroke-dasharray="2 2" d="M3 5h13M5 7h11M3 9h13M5 11h11M3 13h13"/></svg></button>
                        <button class="on" aria-label="Selection cycling"><svg viewBox="0 0 19 19"><path class="w" d="M5 3H3v12h3M11 3h3v3M6 5h4v4H6zM6 11h3"/><path fill="#fff" d="M8 7l9 6-4 1-2 4z"/></svg></button>
                        <button class="on" aria-label="Object tracking"><svg viewBox="0 0 19 19"><path class="w" d="M2 15.500h15M3 15L16 4M9 8l3 4"/></svg></button>
                        <button class="on" aria-label="Object snap"><svg viewBox="0 0 19 19"><path class="w" d="M7 4.500h9.500v11h-11V7M2.500 2.500h4v4h-4z"/></svg></button>
                        <button class="on" aria-label="Annotation visibility"><svg viewBox="0 0 19 19"><path fill="#fff" d="M8 2l7 14-5-4-2 3-2-3-5 4z"/><circle cx="14" cy="6" r="3" fill="#fff"/></svg></button>
                        <button aria-label="Annotation scale"><svg viewBox="0 0 19 19"><path class="lf" d="M9 3l6 13-5-4v3H8v-3l-5 4z"/></svg></button>
                        <button class="scale">1:1<i class="tri open"></i></button>
                        <button aria-label="Isolate objects"><svg viewBox="0 0 19 19"><path class="l" d="M3.500 3.500h5v5h-5zM9 11l3 6H6z"/><circle class="l" cx="14" cy="8" r="3"/></svg></button>
                        <button aria-label="Settings"><svg viewBox="-3 -3 22 22"><use href="#gear" width="16" height="16"/></svg></button>
                    </div>
                </footer>
            </div>
        </div>
    </div>
</body>
</html>
```

FILE: styles.css
```css
* {
    box-sizing: border-box;
}
body {
    margin: 0;
    background: #000;
    color: #dfe3e8;
    font-family: "Open Sans", "Noto Sans", sans-serif;
    font-size: 11px;
    line-height: 16px;
}
button, input, select {
    margin: 0;
    padding: 0;
    border: none;
    background: none;
    color: inherit;
    font: inherit;
}
h2 {
    margin: 0;
    font-weight: 500;
}
svg {
    display: block;
    flex: none;
}
.defs {
    position: absolute;
}

/* icon paint */
.l, .l2, .w {
    fill: none;
    stroke: #d5d9dd;
}
.l2 {
    stroke-width: 2px;
}
.w {
    stroke: #fff;
}
.b {
    fill: none;
    stroke: #65aee0;
}
.lf { fill: #d5d9dd; }
.bf { fill: #79bcec; }
.yf { fill: #f2cc72; }
.corner { fill: #9aa1a8; }
.blk {
    fill: #59636e;
    stroke: #cdd1d5;
}
.ring {
    fill: rgba(130, 140, 150, 0.5);
    stroke: #cdd1d5;
}
.letter {
    fill: #d5d9dd;
    font-family: "Liberation Sans", sans-serif;
    text-anchor: middle;
}
.letter.heavy {
    stroke: #d5d9dd;
    stroke-width: 1px;
}
.letter.blue {
    fill: #65aee0;
}
.tiny {
    fill: #d5d9dd;
    font: 7px "Liberation Sans", sans-serif;
    text-anchor: middle;
}
.tri {
    border: solid transparent;
    border-width: 4px 0 4px 5px;
    border-left-color: #fff;
}
.tri.open {
    border-width: 4px 4px 0;
    border-color: currentColor transparent transparent;
}

.app {
    display: flex;
    flex-direction: column;
    height: 100vh;
    padding: 11px 0;
    overflow: hidden;
}
.top-strip {
    height: 11px;
    flex: none;
    overflow: hidden;
    background: #343d4b;
    border-bottom: 1px solid #20262f;
}
.workspace {
    display: flex;
    flex: 1;
    min-height: 0;
}

/* left tool set */
.tools {
    display: flex;
    flex-direction: column;
    width: 170px;
    background: #333c46;
    border-right: 2px solid #222931;
    font-family: "Liberation Sans", Arial, sans-serif;
}
.tool-tabs {
    display: flex;
    height: 21px;
    flex: none;
    font-size: 12px;
}
.tool-tabs button {
    flex: 1;
    background: #272d36;
    color: #a8adb3;
}
.tool-tabs .active {
    flex: 0 0 72px;
    padding-right: 6px;
    background: #333c46;
    color: #fff;
}
.tool-tabs .collapse {
    display: grid;
    place-items: center;
    flex: 0 0 20px;
    background: #2c343e;
}
.panel {
    padding: 0 3px 4px 0;
    border-bottom: 1px solid #232a33;
}
.panel.closed {
    padding-bottom: 0;
}
.panel header {
    display: flex;
    align-items: center;
    height: 20px;
    padding-top: 2px;
}
.panel header .tri {
    margin: 0 6px 0 1px;
    color: #fff;
}
.panel header .tri.open {
    margin: 0 4px 0 0;
}
.panel h2 {
    flex: 1;
    color: #f0f2f4;
    font-size: 11px;
}
.gear {
    margin-right: 1px;
    color: #eef0f2;
}
.gear svg {
    width: 9px;
    height: 9px;
}
.grid {
    display: grid;
    grid-template-columns: repeat(8, 1fr);
    grid-auto-rows: 21px;
    grid-auto-flow: dense;
}
.grid.second {
    margin-top: 2px;
}
.grid button {
    display: grid;
    place-items: center;
    min-width: 0;
}
.grid svg {
    width: 20px;
    height: 20px;
}
.grid .big {
    grid-column: span 2;
    grid-row: span 2;
}
.grid .big svg {
    width: 40px;
    height: 40px;
}
.grid .hover {
    background: #262d35;
}
.tools-footer {
    display: flex;
    gap: 16px;
    margin-top: auto;
    padding: 0 9px 5px;
}

/* document area */
.stage {
    display: flex;
    flex: 1;
    flex-direction: column;
    min-width: 0;
}
.stage-row {
    display: flex;
    flex: 1;
    min-height: 0;
}
.document {
    display: flex;
    flex: 1;
    flex-direction: column;
    min-width: 0;
}
.file-tabs {
    display: flex;
    height: 21px;
    background: #303947;
    border-bottom: 1px solid #1b2026;
}
.file-tabs button {
    display: flex;
    align-items: center;
    justify-content: center;
    width: 22px;
    border-right: 1px solid #20262e;
}
.file-tabs .file {
    justify-content: flex-start;
    width: 121px;
    padding-left: 3px;
    background: #445064;
    font-family: "Liberation Sans", sans-serif;
    color: #f5f6f8;
}
.canvas {
    position: relative;
    flex: 1;
    min-height: 0;
    overflow: hidden;
    background: #1f2428;
}
.drawing {
    width: 100%;
    height: 100%;
}
.view-label {
    position: absolute;
    top: 6px;
    left: 13px;
    display: flex;
    align-items: center;
    color: #8e9294;
    font-family: "DejaVu Sans", sans-serif;
    line-height: 15px;
}
.view-label span + span {
    margin-left: 8px;
    padding-left: 5px;
    border-left: 1px solid #777b7d;
    line-height: 12px;
}
.view-label .cross {
    width: 10px;
    font-size: 8px;
}
.viewcube {
    position: absolute;
    top: 13px;
    right: 13px;
    display: flex;
    flex-direction: column;
    align-items: center;
    gap: 18px;
}
.dir, .face {
    fill: #a9acae;
    font: bold 19px "Liberation Sans", sans-serif;
    text-anchor: middle;
}
.face {
    fill: #3d4144;
    font-size: 11px;
    font-family: "Open Sans", sans-serif;
    font-weight: 600;
}
.wcs {
    display: flex;
    align-items: center;
    gap: 8px;
    height: 12px;
    padding: 0 4px;
    border-radius: 4px;
    background: #5d6467;
    color: #1f2428;
    font-family: "Liberation Sans", sans-serif;
    font-size: 10px;
    line-height: 12px;
}
.prompt {
    position: absolute;
    top: 485px;
    left: 551px;
    display: flex;
    align-items: center;
    justify-content: space-between;
    width: 164px;
    height: 18px;
    padding: 0 3px 0 1px;
    border: 1px solid #15181b;
    background: #858585;
    color: #17191b;
    white-space: nowrap;
}
.more {
    display: grid;
    place-items: center;
    width: 9px;
    height: 9px;
    border: 1px solid #fff;
    border-radius: 2px;
    background: #eee;
}
.more::after {
    content: "";
    border: solid transparent;
    border-width: 3px 2px 0;
    border-top-color: #222;
}
.command {
    position: absolute;
    bottom: 1px;
    left: 50%;
    display: flex;
    align-items: center;
    width: 466px;
    height: 21px;
    margin-left: -234px;
    background: #303947;
    color: #f2f4f6;
}
.command .history {
    display: flex;
    align-items: center;
    justify-content: center;
    gap: 3px;
    width: 36px;
    height: 21px;
    border-right: 1px solid #222932;
    color: #aeb4bb;
    font-family: "DejaVu Sans Mono", monospace;
}
.history .tri.open, .scale .tri.open {
    border-width: 4px 3px 0;
}
.command input {
    flex: 1;
    min-width: 0;
    padding-left: 4px;
    font-family: Roboto, sans-serif;
    font-weight: 500;
}
.help {
    width: 13px;
    height: 13px;
    border-radius: 50%;
    background: #fff;
    color: #2c3f60;
    font-weight: bold;
    line-height: 13px;
}
.up {
    margin: 0 3px 0 8px;
    border: solid transparent;
    border-width: 0 3px 4px;
    border-bottom-color: #a6acb3;
}

/* right palettes */
.palettes {
    display: flex;
    flex-direction: column;
    width: 222px;
    background: #333c4a;
    border-left: 1px solid #1e242c;
}
.palette-tabs {
    display: flex;
    height: 21px;
    flex: none;
}
.palette-tabs button, .palette-tabs span {
    display: grid;
    place-items: center;
    width: 49px;
    border-right: 1px solid #1f252d;
    background: #272d36;
}
.palette-tabs svg {
    width: 17px;
    height: 17px;
}
.palette-tabs span {
    flex: 1;
}
.palette-tabs .active {
    background: #333c4a;
}
.palette-tabs .collapse {
    width: 22px;
    border: none;
    background: #2d3541;
    color: #a6acb3;
}
.palette-tabs .collapse svg {
    width: 9px;
    height: 7px;
}
.layers, .properties {
    padding: 0 9px 0 10px;
}
.layers {
    border-bottom: 1px solid #262d37;
    padding-bottom: 8px;
}
.title {
    display: flex;
    align-items: center;
    height: 18px;
    margin: 0 0 0 -2px;
}
.title h2 {
    flex: 1;
    color: #f4f5f7;
    font-family: Roboto, "Liberation Sans", sans-serif;
    font-size: 12px;
}
.layer-tools {
    display: flex;
    justify-content: space-between;
    height: 40px;
    align-items: center;
}
.layer-tools svg {
    width: 18px;
    height: 18px;
}
.select {
    position: relative;
    display: flex;
    align-items: center;
    height: 17px;
    background: #455063;
    border: 1px solid #29313d;
    color: #f0f2f4;
}
.select::after {
    content: "";
    position: absolute;
    right: 3px;
    border: solid transparent;
    border-width: 4px 3px 0;
    border-top-color: #dfe3e8;
    pointer-events: none;
}
.select select {
    flex: 1;
    min-width: 0;
    padding-left: 4px;
    appearance: none;
    outline: none;
}
.select.tall {
    height: 21px;
    margin-bottom: 5px;
}
.select.current svg {
    margin: 0 2px 0 8px;
}
.select.current select {
    padding-left: 4px;
}
.hide-list {
    display: flex;
    align-items: center;
    gap: 10px;
    height: 18px;
    padding-left: 2px;
    margin-bottom: 6px;
    color: #c2c8cf;
}
.hide-list .tri.open {
    color: #8c949e;
    border-width: 7px 4px 0;
}
.layer-list {
    height: 141px;
    background: #445062;
    border: 1px solid #252c36;
    border-width: 1px 0 1px;
}
.layer-list table {
    width: 100%;
    table-layout: fixed;
    border-collapse: collapse;
}
.layer-list th, .layer-list td {
    height: 20px;
    padding: 0;
    font-weight: 400;
    text-align: center;
}
.layer-list th {
    position: relative;
    background: #272d36;
}
.layer-list th svg {
    display: inline-block;
}
.layer-list th.sorted {
    background: #3e4b60;
}
.layer-list th:nth-child(1) { width: 23px; }
.layer-list th:nth-child(2) { width: 17px; }
.layer-list th:nth-child(3) { width: 38px; }
.layer-list th:nth-child(4) { width: 18px; }
.layer-list th:nth-child(5) { width: 22px; }
.layer-list th:nth-child(6) { width: 44px; }
.layer-list .name {
    padding-left: 2px;
    text-align: left;
}
.layer-list th.name svg {
    margin-left: 7px;
}
.sort-mark {
    position: absolute;
    bottom: 0;
    left: 6px;
    border: solid transparent;
    border-width: 0 5px 4px;
    border-bottom-color: #3f8bdc;
}
.layer-list td {
    height: 18px;
    background: #7e91a3;
    color: #fff;
}
.layer-list td.weight {
    padding-right: 11px;
}
.dot, .swatch {
    display: inline-block;
    width: 8px;
    height: 8px;
    vertical-align: middle;
}
.dot {
    border-radius: 50%;
    background: #d8dcde;
}
.swatch {
    flex: none;
    width: 9px;
    height: 9px;
    border: 1px solid #20252c;
    background: #fff;
}
.line i {
    display: block;
    height: 1px;
    margin-left: 9px;
    background: #fff;
}
.hscroll {
    width: 87%;
    height: 6px;
    margin: 4px 0 0 1px;
    border-radius: 3px;
    background: #858b94;
}
.list-tools {
    display: flex;
    align-items: center;
    gap: 14px;
    height: 27px;
    padding: 4px 6px 0;
}
.list-tools .minus {
    margin-left: auto;
}
.search {
    display: flex;
    align-items: center;
    justify-content: center;
    gap: 5px;
    height: 20px;
    padding-right: 14px;
    border-radius: 3px;
    background: #fff;
}
.search input {
    width: 98px;
    outline: none;
    color: #444;
    font-family: Roboto, sans-serif;
    font-size: 12px;
    appearance: none;
}
.search input::-webkit-search-cancel-button {
    display: none;
}
.search input::placeholder {
    color: #b0b3b7;
    opacity: 1;
}
.properties {
    display: flex;
    flex: 1;
    flex-direction: column;
    min-height: 0;
    padding-bottom: 8px;
}
.properties .title {
    gap: 10px;
    margin-bottom: 5px;
}
.toggle {
    display: flex;
    border: 1px solid #29313b;
    font-size: 9px;
    line-height: 12px;
}
.toggle button {
    width: 27px;
    color: #8d949d;
}
.toggle .active {
    background: #465267;
    color: #fff;
    font-weight: bold;
}
.select.disabled {
    margin-bottom: 4px;
    background: #363f4d;
    border-color: #353e4b;
    color: #727b87;
}
.select.disabled::after {
    border-top-color: #646d79;
}
.select.disabled select {
    opacity: 1;
}
.prop-view {
    display: flex;
    flex: 1;
    gap: 7px;
    min-height: 0;
    overflow: hidden;
}
.prop-rows {
    display: grid;
    flex: 1;
    grid-template-columns: 1fr 96px;
    grid-auto-rows: 1fr;
    align-items: center;
    column-gap: 9px;
    height: 106%;
}
.prop-rows label {
    overflow: hidden;
    color: #c3c8cf;
    text-align: right;
    white-space: nowrap;
}
.prop-rows input {
    min-width: 0;
    height: 17px;
    padding-left: 2px;
    background: #435064;
    border: 1px solid #2b3340;
    color: #f0f2f4;
}
.select.color .swatch {
    margin: 0 3px 0 6px;
}
.select.color select {
    padding-left: 6px;
}
.rule {
    width: 30px;
    height: 1px;
    margin-left: 6px;
    background: #fff;
}
.select.ltype select {
    padding-left: 12px;
}
.pair {
    display: flex;
    align-items: center;
    gap: 4px;
    min-width: 0;
}
.pair .right {
    width: 58px;
    padding-right: 3px;
    border-left-color: #4c7fc0;
    text-align: right;
}
.pair .long {
    width: 76px;
}
.mini {
    flex: 1;
}
.mini svg {
    width: 12px;
    height: 10px;
    margin-left: 5px;
}
.vscroll {
    width: 5px;
    height: 174px;
    margin-top: 1px;
    border-radius: 3px;
    background: #6f7884;
}

/* status bar */
.status {
    display: flex;
    align-items: center;
    height: 23px;
    flex: none;
    background: #323b49;
    border-top: 1px solid #20262e;
}
.layouts {
    display: flex;
    height: 22px;
    margin-right: auto;
    color: #8b939e;
}
.layouts button {
    width: 56px;
    border-right: 1px solid #20262e;
}
.layouts .active {
    background: #445064;
    color: #fff;
}
.layouts .add {
    display: grid;
    place-items: center;
    width: 21px;
    color: #dfe3e8;
}
.coords {
    margin-right: 4px;
    color: #9fa6af;
}
.modes {
    display: flex;
    align-items: center;
    gap: 2px;
    padding-right: 5px;
}
.modes svg {
    width: 19px;
    height: 19px;
}
.modes .on {
    background: #4d7cab;
}
.scale {
    display: flex;
    align-items: center;
    gap: 3px;
    color: #b5bbc2;
}
```
